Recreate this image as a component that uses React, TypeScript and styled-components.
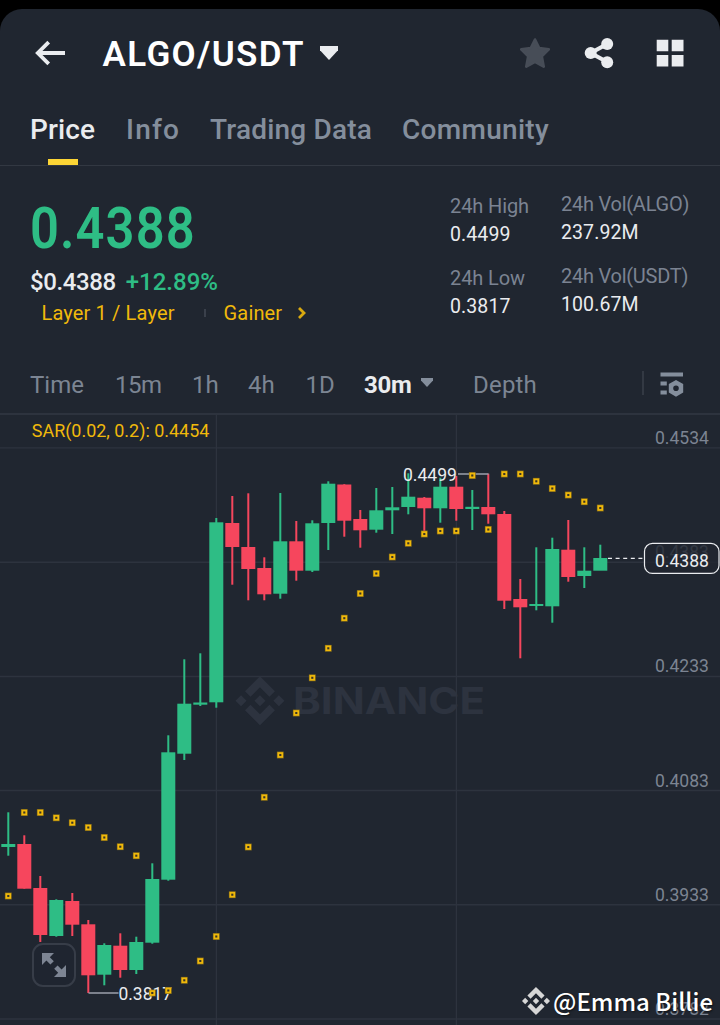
import React from 'react';
import styled, { createGlobalStyle } from 'styled-components';

const color = {
  panel: '#202630',
  line: '#2d333e',
  text: '#eaecef',
  muted: '#848e9c',
  axis: '#7c8492',
  dim: '#474d57',
  green: '#2ebd85',
  red: '#f6465d',
  gold: '#f0b90b',
  accent: '#fcd535',
};

const GlobalStyle = createGlobalStyle`
  html, body { margin: 0; background: #000; }
  * { box-sizing: border-box; }
`;

const Screen = styled.main`
  display: flex;
  flex-direction: column;
  width: 720px;
  height: 1025px;
  padding-top: 9px;
  background: #000;
  color: ${color.text};
  font-family: Roboto, 'Liberation Sans', sans-serif;
  white-space: nowrap;
  overflow: hidden;
`;

const Panel = styled.div`
  flex: 1;
  display: flex;
  flex-direction: column;
  background: ${color.panel};
  border-radius: 22px 22px 0 0;
  overflow: hidden;
`;

const Header = styled.header`
  display: flex;
  align-items: center;
  height: 90px;
  padding: 0 36px 2px 35px;
`;

const Icon = styled.svg`
  display: block;
  flex: none;
`;

const Title = styled.h1`
  margin: 0 15px 0 37.5px;
  padding-top: 4px;
  font-size: 35px;
  line-height: 50px;
  font-weight: 600;
  letter-spacing: 1.35px;
  color: #fff;
`;

const Actions = styled.div`
  display: flex;
  align-items: center;
  gap: 34px;
  margin-left: auto;
`;

const Tabs = styled.nav`
  display: flex;
  height: 67px;
  padding-left: 30px;
  border-bottom: 1px solid #323842;
`;

const Tab = styled.div<{ $width: number; $spacing: number; $active?: boolean }>`
  width: ${(p) => p.$width}px;
  padding-top: 1px;
  font-size: 28px;
  line-height: 59px;
  font-weight: 500;
  letter-spacing: ${(p) => p.$spacing}px;
  color: ${(p) => (p.$active ? color.text : color.muted)};
`;

const Indicator = styled.div`
  width: 30px;
  height: 6px;
  margin-left: 18px;
  background: ${color.accent};
`;

const Summary = styled.section`
  display: flex;
  height: 190px;
  padding: 31px 0 0 30px;
`;

const PriceColumn = styled.div`
  width: 420px;
`;

const LastPrice = styled.div`
  padding-top: 2px;
  font-size: 57px;
  line-height: 60px;
  font-weight: 600;
  letter-spacing: 1.2px;
  transform: scaleX(0.89);
  transform-origin: left;
  color: ${color.green};
`;

const SubPrice = styled.div`
  display: flex;
  gap: 10px;
  margin-top: 6px;
  font-size: 24px;
  line-height: 35px;
  font-weight: 500;
`;

const Fiat = styled.span`
  letter-spacing: -0.4px;
`;

const Change = styled.span`
  color: ${color.green};
`;

const Tags = styled.div`
  display: flex;
  align-items: center;
  height: 28px;
  margin-top: -1px;
  padding-left: 11.5px;
  font-size: 20px;
  line-height: 28px;
  letter-spacing: 0.15px;
  color: ${color.gold};
`;

const TagDivider = styled.span`
  width: 2px;
  height: 8px;
  margin: 0 18px 0 29px;
  background: #3a404b;
`;

const Chevron = styled(Icon)`
  margin-left: 15px;
`;

const StatColumn = styled.dl<{ $lift?: number }>`
  width: 111px;
  margin: ${(p) => -5 - (p.$lift ?? 0)}px 0 0;
`;

const StatLabel = styled.dt<{ $spacing?: number }>`
  font-size: 20px;
  line-height: 28px;
  letter-spacing: ${(p) => p.$spacing ?? -0.1}px;
  color: #7b8392;
`;

const StatValue = styled.dd`
  margin: 0 0 15px;
  padding-top: 1px;
  font-size: 19.5px;
  line-height: 28px;
  letter-spacing: 0.1px;
`;

const Intervals = styled.div`
  display: flex;
  align-items: center;
  height: 57px;
  padding-left: 30px;
`;

const Interval = styled.div<{ $width: number; $spacing?: number; $active?: boolean }>`
  display: flex;
  align-items: center;
  gap: 9px;
  width: ${(p) => p.$width}px;
  font-size: 24px;
  line-height: 34px;
  letter-spacing: ${(p) => p.$spacing ?? 0}px;
  font-weight: ${(p) => (p.$active ? 700 : 400)};
  color: ${(p) => (p.$active ? color.text : '#7c8593')};
`;

const IntervalDivider = styled.span`
  width: 2px;
  height: 24px;
  margin: -3px 16px 0 auto;
  background: #333943;
`;

const SettingsIcon = styled(Icon)`
  margin-right: 36px;
`;

const ChartArea = styled.section`
  position: relative;
  flex: 1;
`;

const ExpandButton = styled.button`
  position: absolute;
  left: 32px;
  bottom: 38px;
  display: grid;
  place-items: center;
  width: 44px;
  height: 44px;
  padding: 0;
  border: 2px solid #373d48;
  border-radius: 11px;
  background: rgba(32, 38, 48, 0.85);
`;

const Author = styled.div`
  position: absolute;
  right: 7px;
  bottom: 7px;
  display: flex;
  align-items: center;
  gap: 3.5px;
  font-family: 'Noto Sans CJK SC', 'Noto Sans', sans-serif;
  font-size: 24px;
  line-height: 34px;
  font-weight: 500;
  color: #fff;
  text-shadow: 1px 1px 2px rgba(0, 0, 0, 0.6);
`;

type Candle = [up: number, high: number, low: number, top: number, bottom: number];

const candles: Candle[] = [
  [1, 812.3, 855.7, 844, 847],
  [0, 835.3, 888.7, 844, 888.7],
  [0, 876, 942, 888, 935],
  [1, 899.3, 936.7, 900, 936],
  [0, 893, 936, 901, 924.7],
  [0, 920, 993, 924.3, 975.3],
  [1, 943.3, 985.3, 945, 974.7],
  [0, 933.3, 977.7, 945.7, 970],
  [1, 936.7, 974, 942, 970],
  [1, 863.3, 943.7, 879, 942.7],
  [1, 735.3, 880.7, 752.3, 879.7],
  [1, 659.3, 760, 703.7, 753.7],
  [1, 653.3, 706, 702.5, 704.7],
  [1, 518, 707.7, 522.3, 702.3],
  [0, 496, 584.7, 523, 547],
  [0, 493.3, 600.3, 547, 569],
  [0, 557.3, 600.3, 568, 594.3],
  [1, 493, 598.7, 541.3, 593.7],
  [0, 521, 580.7, 541.3, 570.7],
  [1, 520.3, 572, 523.3, 570.7],
  [1, 481.3, 550, 483.7, 523],
  [0, 484.2, 536.7, 484.5, 520.7],
  [0, 510, 547.7, 519, 530.3],
  [1, 488, 532.7, 510.3, 529.7],
  [1, 487, 534, 507.3, 510.3],
  [1, 473.3, 514.3, 496.7, 507],
  [0, 497, 531.7, 497.7, 508.3],
  [1, 477.7, 522.7, 486.7, 508.3],
  [0, 476, 520.7, 486.7, 509],
  [1, 490, 530, 506.8, 509],
  [0, 473.7, 523.7, 507, 514.3],
  [0, 511, 609, 514, 600.7],
  [0, 579, 658.3, 599, 607.3],
  [1, 547.3, 610.3, 604, 606],
  [1, 537.7, 622.7, 549, 606.3],
  [0, 520, 581.7, 549.7, 577],
  [1, 547.3, 588, 570.7, 576],
  [1, 544.7, 570, 558, 570.7],
];

const sar = [
  896, 812.5, 812.5, 817.8, 822.7, 827.5, 837.5, 846.7, 855.7, 993, 990.5, 980.3, 961, 936.5, 894.7, 847,
  797.3, 755, 713, 677.8, 648.3, 618.2, 593.5, 573.5, 557, 543.3, 534, 531, 531, 475.5, 529.5, 474, 474,
  481.3, 488.5, 495, 501.7, 508,
];

const gridRows = [447.9, 562.2, 676.5, 790.5, 904.7, 1019];

const axisLabels: [string, number][] = [
  ['0.4534', 444.3],
  ['0.4383', 557.8],
  ['0.4233', 672],
  ['0.4083', 786.7],
  ['0.3933', 901],
  ['0.3782', 1015],
];

const xAt = (i: number) => 8.3 + i * 16;

const binanceMark =
  'M16.624 13.92l2.7175 2.7155-7.353 7.353-7.353-7.352 2.7175-2.7165 4.6355 4.6595zM21.26 9.2836L24 12l-2.7154 2.7164L18.568 12zM11.9885 9.2846l2.7164 2.6914-2.7164 2.7174L9.272 12zM2.7164 9.2836L5.4088 12l-2.6914 2.6924L0 12zM11.9885.0115l7.353 7.329-2.7174 2.7154-4.6356-4.6356-4.6355 4.6595-2.7174-2.7154z';

function Chart() {
  return (
    <Icon
      width="720"
      height="612"
      viewBox="0 413 720 612"
      fontFamily="Roboto, 'Liberation Sans', sans-serif"
      fontSize="18.3"
    >
      <g fill="none" stroke={color.line}>
        <path d="M0 414H720" strokeWidth="1.8" />
        {gridRows.map((y) => (
          <path key={y} d={`M0 ${y}H720`} strokeWidth="1.4" />
        ))}
        <path d="M216.4 415V1025M456.4 415V1025" strokeWidth="1.3" />
      </g>

      <g fill="#2d333f">
        <path transform="translate(235.5 676.3) scale(2.04)" d={binanceMark} />
        <text
          x="293"
          y="714"
          fontFamily="Inter, sans-serif"
          fontWeight="700"
          fontSize="37.5"
          textLength="192"
          lengthAdjust="spacingAndGlyphs"
        >
          BINANCE
        </text>
      </g>

      <g fill={color.axis}>
        {axisLabels.map(([label, y]) => (
          <text key={label} x="655" y={y} textLength="54" lengthAdjust="spacingAndGlyphs">
            {label}
          </text>
        ))}
      </g>

      {candles.map(([up, high, low, top, bottom], i) => (
        <g key={i} fill={up ? color.green : color.red}>
          <rect x={xAt(i) - 1} y={high} width="2" height={low - high} />
          <rect x={xAt(i) - 7} y={top} width="14" height={bottom - top} />
        </g>
      ))}

      <path d="M458 474H488.5M88.5 993H118.5" stroke="#9aa0aa" strokeWidth="1.5" />
      <g fill={color.text}>
        <text x="403" y="481" textLength="54" lengthAdjust="spacingAndGlyphs">
          0.4499
        </text>
        <text x="118.5" y="1000" textLength="53.5" lengthAdjust="spacingAndGlyphs">
          0.3817
        </text>
      </g>

      {sar.map((y, i) => (
        <g key={i}>
          <rect x={xAt(i) - 3.4} y={y - 3.4} width="6.8" height="6.8" fill="#8f7317" />
          <rect x={xAt(i) - 1.9} y={y - 1.9} width="3.8" height="3.8" fill="#3a3524" stroke={color.gold} strokeWidth="1.7" />
        </g>
      ))}

      <text x="31.8" y="437.3" fill={color.gold} textLength="177.5" lengthAdjust="spacingAndGlyphs">
        SAR(0.02, 0.2): 0.4454
      </text>

      <path d="M608 558.4H644" stroke={color.text} strokeWidth="1.2" strokeDasharray="4 3.6" />
      <rect x="644.5" y="543.4" width="74.5" height="30" rx="8" fill={color.panel} fillOpacity="0.8" stroke={color.text} strokeWidth="1.2" />
      <text x="655" y="567" fill={color.text} textLength="54" lengthAdjust="spacingAndGlyphs">
        0.4388
      </text>
    </Icon>
  );
}

export default function App() {
  return (
    <Screen>
      <GlobalStyle />
      <Panel>
        <Header>
          <Icon width="30" height="26" viewBox="35 40 30 26" fill="none" stroke={color.text} strokeWidth="3.8">
            <path d="M65 53H38M48.7 42.2L37.8 53l10.9 10.8" />
          </Icon>
          <Title>ALGO/USDT</Title>
          <Icon width="18" height="18" viewBox="320 44 18 18" fill={color.text}>
            <path d="M320 46h18v4.2L329 60l-9-9.8z" />
          </Icon>
          <Actions>
            <Icon width="30" height="32" viewBox="520 37 30 32" fill={color.dim} stroke={color.dim} strokeWidth="2.6" strokeLinejoin="round">
              <path d="M535 39.5l4.2 8.6 9.600 1.300-7 6.800 1.900 10.400-8.700-4.800-8.700 4.800 1.900-10.400-7-6.800 9.600-1.300z" />
            </Icon>
            <Icon width="30" height="32" viewBox="584.3 37 30 32" fill={color.text}>
              <path d="M607.5 44L591 53l16.500 9" fill="none" stroke={color.text} strokeWidth="4.2" />
              <circle cx="591" cy="53" r="6" />
              <circle cx="607.5" cy="44" r="6" />
              <circle cx="607.5" cy="62.200" r="6" />
            </Icon>
            <Icon width="36" height="32" viewBox="648 37 36 32" fill={color.text}>
              <path d="M656.700 39.800h11.600v11.400h-11.600zM671.700 39.800h11.800v11.400h-11.800zM656.700 55h11.600v11.400h-11.600zM671.700 55h11.800v11.400h-11.800z" />
            </Icon>
          </Actions>
        </Header>

        <Tabs>
          <Tab $width={96} $spacing={0.1} $active>
            Price
            <Indicator />
          </Tab>
          <Tab $width={84} $spacing={1.2}>Info</Tab>
          <Tab $width={192} $spacing={0.2}>Trading Data</Tab>
          <Tab $width={160} $spacing={0.3}>Community</Tab>
        </Tabs>

        <Summary>
          <PriceColumn>
            <LastPrice>0.4388</LastPrice>
            <SubPrice>
              <Fiat>$0.4388</Fiat>
              <Change>+12.89%</Change>
            </SubPrice>
            <Tags>
              Layer 1 / Layer
              <TagDivider />
              Gainer
              <Chevron width="10" height="14" viewBox="0 0 10 14" fill="none" stroke="#d9a90f" strokeWidth="2.8">
                <path d="M2 2l5 5-5 5" />
              </Chevron>
            </Tags>
          </PriceColumn>
          <StatColumn>
            <StatLabel>24h High</StatLabel>
            <StatValue>0.4499</StatValue>
            <StatLabel>24h Low</StatLabel>
            <StatValue>0.3817</StatValue>
          </StatColumn>
          <StatColumn $lift={2}>
            <StatLabel $spacing={-0.25}>24h Vol(ALGO)</StatLabel>
            <StatValue>237.92M</StatValue>
            <StatLabel $spacing={-0.25}>24h Vol(USDT)</StatLabel>
            <StatValue>100.67M</StatValue>
          </StatColumn>
        </Summary>

        <Intervals>
          <Interval $width={85}>Time</Interval>
          <Interval $width={77} $spacing={-0.5}>15m</Interval>
          <Interval $width={56}>1h</Interval>
          <Interval $width={57.5}>4h</Interval>
          <Interval $width={58.5}>1D</Interval>
          <Interval $width={109} $spacing={-0.3} $active>
            30m
            <Icon width="14" height="14" viewBox="420 378 14 14" fill={color.muted}>
              <path d="M421 378h12v2.500l-6 6.500-6-6.500z" />
            </Icon>
          </Interval>
          <Interval $width={70} $spacing={0.2}>Depth</Interval>
          <IntervalDivider />
          <SettingsIcon width="24" height="26" viewBox="660.500 371.500 24 26" fill={color.muted}>
            <path d="M661 372h22.500v4H661zM661 381h6.300v4H661zM661 390h6.300v4H661z" />
            <path fillRule="evenodd" d="M676.500 379.400l7.200 4.200v8.400l-7.200 4.200-7.200-4.200v-8.400zM676.500 385a2.800 2.800 0 1 0 0 5.600 2.800 2.800 0 0 0 0-5.600z" />
          </SettingsIcon>
        </Intervals>

        <ChartArea>
          <Chart />
          <ExpandButton>
            <Icon width="26" height="26" viewBox="41 952 26 26" fill="#7d8593">
              <path d="M42 953h12l-4.200 4.200 4 4-3.400 3.400-4-4L42 965zM66 977H54l4.200-4.200-4-4 3.400-3.400 4 4L66 965z" />
            </Icon>
          </ExpandButton>
          <Author>
            <Icon width="28" height="28" viewBox="0 0 24 24" fill="#d6d6d6">
              <path d={binanceMark} />
            </Icon>
            @Emma Billie
          </Author>
        </ChartArea>
      </Panel>
    </Screen>
  );
}
